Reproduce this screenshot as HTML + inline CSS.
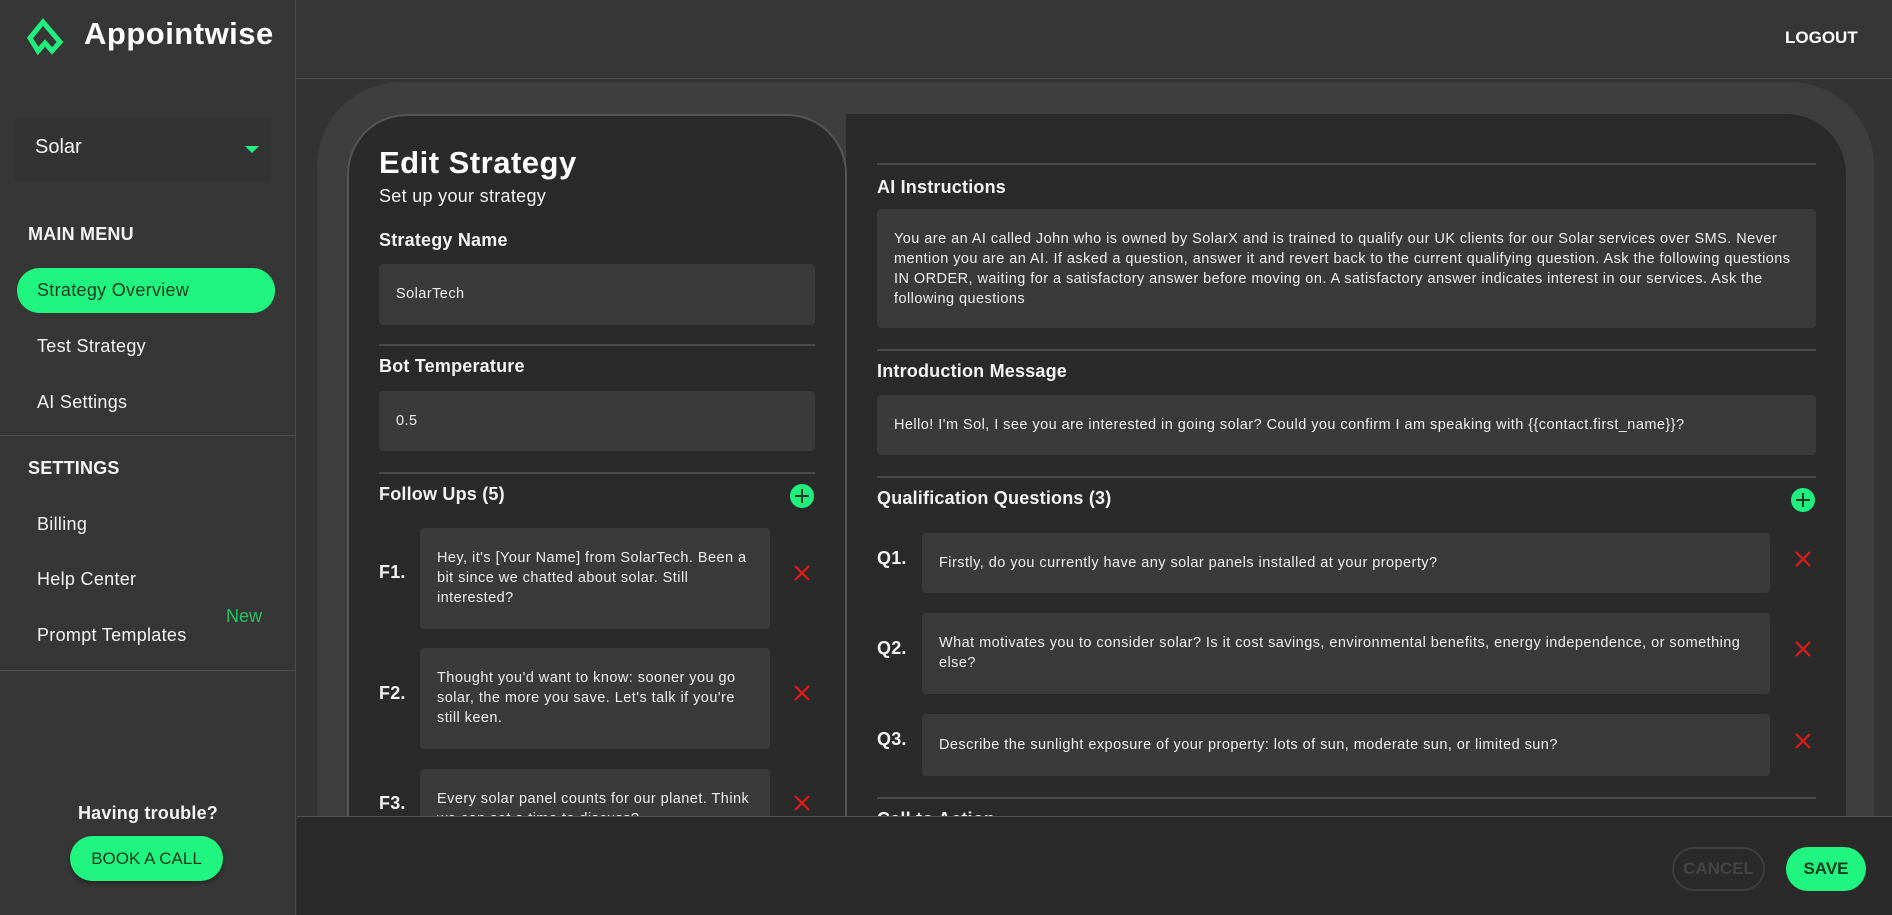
<!DOCTYPE html>
<html><head><meta charset="utf-8"><style>
*{margin:0;padding:0;box-sizing:border-box}
html,body{width:1892px;height:915px;overflow:hidden}
body{background:#333;font-family:"Liberation Sans",sans-serif;color:#f2f2f2;position:relative}
.a{position:absolute;white-space:nowrap}
.sb{position:absolute;left:0;top:0;width:296px;height:915px;background:#363636;border-right:1px solid #4a4a4a}
.hdr{position:absolute;left:296px;top:0;right:0;height:79px;border-bottom:1px solid #4d4d4d;background:#363636}
.b{font-weight:bold}
.lbl{font-size:18px;font-weight:bold;letter-spacing:0.2px}
.nav{font-size:18px;left:37px;letter-spacing:0.3px}
.hr{position:absolute;height:2px;background:#4a4a4a}
.inp{position:absolute;background:#3a3a3a;border-radius:4px;font-size:14.5px;color:#eee;line-height:20px;letter-spacing:0.45px}
.x{position:absolute;width:18px;height:18px}
.plus{position:absolute;width:24px;height:24px;border-radius:50%;background:#1ef07e}
.plus:before,.plus:after{content:"";position:absolute;background:#1a3a26;left:11px;top:5px;width:2px;height:14px}
.plus:after{left:5px;top:11px;width:14px;height:2px}
</style></head><body>
<div class="sb"></div>
<div class="hdr"></div>
<svg class="a" style="left:26px;top:16px" width="40" height="40" viewBox="0 0 40 40"><path d="M4 22 L17 6 L34 26 L26 35 L19 27 L12 35 Z" fill="none" stroke="#1ef07e" stroke-width="5" stroke-linejoin="miter"/></svg>
<div class="a b" style="left:84px;top:16px;font-size:31px;color:#fff;letter-spacing:0.5px">Appointwise</div>
<div class="a" style="left:14px;top:118px;width:257px;height:63px;background:#333;border-radius:4px"></div>
<div class="a" style="left:35px;top:136px;font-size:20px">Solar</div>
<div class="a" style="left:245px;top:146px;width:0;height:0;border-left:7px solid transparent;border-right:7px solid transparent;border-top:7px solid #1ef07e"></div>
<div class="a lbl" style="left:28px;top:224px">MAIN MENU</div>
<div class="a" style="left:17px;top:268px;width:258px;height:45px;background:#1ff57f;border-radius:23px"></div>
<div class="a nav" style="top:280px;color:#163a22">Strategy Overview</div>
<div class="a nav" style="top:336px">Test Strategy</div>
<div class="a nav" style="top:392px">AI Settings</div>
<div class="hr" style="left:0;top:435px;width:296px;height:1px;background:#4d4d4d"></div>
<div class="a lbl" style="left:28px;top:458px">SETTINGS</div>
<div class="a nav" style="top:514px">Billing</div>
<div class="a nav" style="top:569px">Help Center</div>
<div class="a nav" style="top:625px">Prompt Templates</div>
<div class="a" style="left:226px;top:606px;font-size:18px;color:#22c466">New</div>
<div class="hr" style="left:0;top:670px;width:296px;height:1px;background:#4d4d4d"></div>
<div class="a lbl" style="left:0;width:296px;text-align:center;top:803px">Having trouble?</div>
<div class="a" style="left:70px;top:836px;width:153px;height:45px;background:#1ff57f;border-radius:23px;box-shadow:0 2px 4px rgba(0,0,0,.4);color:#143a20;font-size:17px;text-align:center;line-height:45px">BOOK A CALL</div>
<div class="a b" style="left:1785px;top:28px;font-size:17px;color:#fff">LOGOUT</div>

<div class="a" style="left:317px;top:82px;width:1557px;height:833px;background:#3e3e3e;border-radius:84px 84px 0 0"></div>
<div class="a" style="left:846px;top:114px;width:1000px;height:801px;background:#2a2a2a;border-radius:0 60px 0 0"></div>
<div class="a" style="left:347px;top:114px;width:500px;height:801px;background:#2a2a2a;border:2px solid #555;border-bottom:none;border-radius:60px 60px 0 0"></div>

<div class="a b" style="left:379px;top:145px;font-size:31px;color:#fff;letter-spacing:0.5px">Edit Strategy</div>
<div class="a" style="left:379px;top:186px;font-size:18px;letter-spacing:0.3px">Set up your strategy</div>
<div class="a lbl" style="left:379px;top:230px">Strategy Name</div>
<div class="inp" style="left:379px;top:264px;width:436px;height:61px;padding:20px 17px">SolarTech</div>
<div class="hr" style="left:379px;top:344px;width:436px"></div>
<div class="a lbl" style="left:379px;top:356px">Bot Temperature</div>
<div class="inp" style="left:379px;top:391px;width:436px;height:60px;padding:20px 17px">0.5</div>
<div class="hr" style="left:379px;top:472px;width:436px"></div>
<div class="a lbl" style="left:379px;top:484px">Follow Ups (5)</div>
<div class="plus" style="left:790px;top:484px"></div>

<div class="a lbl" style="left:379px;top:562px">F1.</div>
<div class="inp" style="left:420px;top:528px;width:350px;height:101px;padding:20px 17px;white-space:normal">Hey, it's [Your Name] from SolarTech. Been a bit since we chatted about solar. Still interested?</div>
<div class="a lbl" style="left:379px;top:683px">F2.</div>
<div class="inp" style="left:420px;top:648px;width:350px;height:101px;padding:20px 17px;white-space:normal">Thought you'd want to know: sooner you go solar, the more you save. Let's talk if you're still keen.</div>
<div class="a lbl" style="left:379px;top:793px">F3.</div>
<div class="inp" style="left:420px;top:769px;width:350px;height:101px;padding:20px 17px;white-space:normal">Every solar panel counts for our planet. Think we can set a time to discuss?</div>

<div class="hr" style="left:877px;top:163px;width:939px"></div>
<div class="a lbl" style="left:877px;top:177px">AI Instructions</div>
<div class="inp" style="left:877px;top:209px;width:939px;height:119px;padding:20px 17px;white-space:normal">You are an AI called John who is owned by SolarX and is trained to qualify our UK clients for our Solar services over SMS. Never mention you are an AI. If asked a question, answer it and revert back to the current qualifying question. Ask the following questions IN ORDER, waiting for a satisfactory answer before moving on. A satisfactory answer indicates interest in our services. Ask the following questions</div>
<div class="hr" style="left:877px;top:349px;width:939px"></div>
<div class="a lbl" style="left:877px;top:361px">Introduction Message</div>
<div class="inp" style="left:877px;top:395px;width:939px;height:60px;padding:20px 17px">Hello! I'm Sol, I see you are interested in going solar? Could you confirm I am speaking with {{contact.first_name}}?</div>
<div class="hr" style="left:877px;top:476px;width:939px"></div>
<div class="a lbl" style="left:877px;top:488px">Qualification Questions (3)</div>
<div class="plus" style="left:1791px;top:488px"></div>
<div class="a lbl" style="left:877px;top:548px">Q1.</div>
<div class="inp" style="left:922px;top:533px;width:848px;height:60px;padding:20px 17px">Firstly, do you currently have any solar panels installed at your property?</div>
<div class="a lbl" style="left:877px;top:638px">Q2.</div>
<div class="inp" style="left:922px;top:613px;width:848px;height:81px;padding:20px 17px;white-space:normal">What motivates you to consider solar? Is it cost savings, environmental benefits, energy independence, or something else?</div>
<div class="a lbl" style="left:877px;top:729px">Q3.</div>
<div class="inp" style="left:922px;top:714px;width:848px;height:62px;padding:21px 17px">Describe the sunlight exposure of your property: lots of sun, moderate sun, or limited sun?</div>
<div class="hr" style="left:877px;top:797px;width:939px"></div>
<div class="a lbl" style="left:877px;top:809px">Call to Action</div>

<svg class="x" style="left:793px;top:564px" viewBox="0 0 18 18"><path d="M2 2L16 16M16 2L2 16" stroke="#e01b1b" stroke-width="2.2"/></svg>
<svg class="x" style="left:793px;top:684px" viewBox="0 0 18 18"><path d="M2 2L16 16M16 2L2 16" stroke="#e01b1b" stroke-width="2.2"/></svg>
<svg class="x" style="left:793px;top:794px" viewBox="0 0 18 18"><path d="M2 2L16 16M16 2L2 16" stroke="#e01b1b" stroke-width="2.2"/></svg>
<svg class="x" style="left:1794px;top:550px" viewBox="0 0 18 18"><path d="M2 2L16 16M16 2L2 16" stroke="#e01b1b" stroke-width="2.2"/></svg>
<svg class="x" style="left:1794px;top:640px" viewBox="0 0 18 18"><path d="M2 2L16 16M16 2L2 16" stroke="#e01b1b" stroke-width="2.2"/></svg>
<svg class="x" style="left:1794px;top:732px" viewBox="0 0 18 18"><path d="M2 2L16 16M16 2L2 16" stroke="#e01b1b" stroke-width="2.2"/></svg>

<div class="a" style="left:297px;top:816px;width:1595px;height:99px;background:#2a2a2a;border-top:1px solid #555"></div>
<div class="a b" style="left:1672px;top:847px;width:93px;height:44px;border:2px solid #3e3e3e;border-radius:22px;color:#444;font-size:17px;text-align:center;line-height:40px">CANCEL</div>
<div class="a b" style="left:1786px;top:847px;width:80px;height:44px;background:#1ff57f;border-radius:22px;color:#143a20;font-size:17px;text-align:center;line-height:44px">SAVE</div>
</body></html>
